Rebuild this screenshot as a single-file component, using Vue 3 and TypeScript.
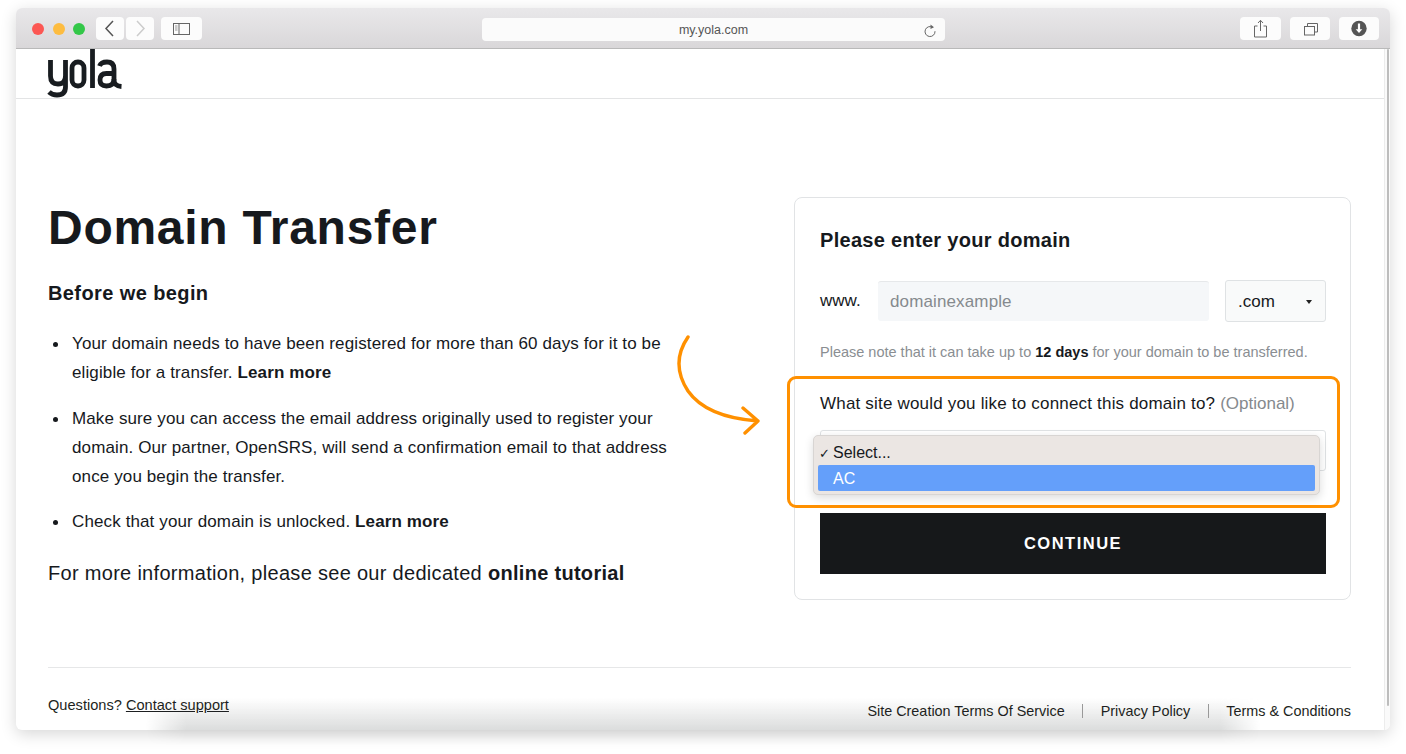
<script setup lang="ts">
const rules: { id: number; parts: { t: string; b?: boolean }[] }[] = [
  { id: 1, parts: [{ t: 'Your domain needs to have been registered for more than 60 days for it to be eligible for a transfer. ' }, { t: 'Learn more', b: true }] },
  { id: 2, parts: [{ t: 'Make sure you can access the email address originally used to register your domain. Our partner, OpenSRS, will send a confirmation email to that address once you begin the transfer.' }] },
  { id: 3, parts: [{ t: 'Check that your domain is unlocked. ' }, { t: 'Learn more', b: true }] },
]
</script>

<template>
  <div class="stage">
    <div class="window">
      <div class="titlebar">
        <div class="lights">
          <span class="light red"></span>
          <span class="light yellow"></span>
          <span class="light green"></span>
        </div>
        <div class="tb-btn nav">
          <svg width="28" height="23" viewBox="0 0 28 23"><path d="M17 4 L10 11.5 L17 19" fill="none" stroke="#555" stroke-width="1.5" /></svg>
        </div>
        <div class="tb-btn nav second">
          <svg width="28" height="23" viewBox="0 0 28 23"><path d="M11 4 L18 11.5 L11 19" fill="none" stroke="#ccc" stroke-width="1.5" /></svg>
        </div>
        <div class="tb-btn wide side">
          <svg width="41" height="23" viewBox="0 0 41 23"><rect x="12.5" y="6.5" width="16" height="11" fill="none" stroke="#666" /><path d="M18 6.5 V17.5" stroke="#666" /><path d="M14 9 H16.5 M14 11 H16.5 M14 13 H16.5" stroke="#999" /></svg>
        </div>
        <div class="url">
          <span>my.yola.com</span>
          <svg class="reload" width="14" height="15" viewBox="0 0 14 15"><path d="M9.8 4.4 A5 5 0 1 0 12 8.2" fill="none" stroke="#666" stroke-width="1" /><path d="M7.5 1.6 L11 4.3 L7.5 6 Z" fill="#666" /></svg>
        </div>
        <div class="tb-btn wide share">
          <svg width="41" height="23" viewBox="0 0 41 23"><path d="M17.5 9 H14.5 V20 H26.5 V9 H23.5" fill="none" stroke="#666" /><path d="M20.5 14 V3.5" stroke="#666" /><path d="M18 6 L20.5 3.3 L23 6" fill="none" stroke="#666" /></svg>
        </div>
        <div class="tb-btn wide tabs">
          <svg width="40" height="23" viewBox="0 0 40 23"><rect x="14.5" y="9.5" width="10" height="8.5" fill="none" stroke="#666" /><path d="M17.5 9 V6.5 H27.5 V15 H25" fill="none" stroke="#666" /></svg>
        </div>
        <div class="tb-btn wide dl">
          <svg width="40" height="23" viewBox="0 0 40 23"><circle cx="20" cy="11.5" r="7.7" fill="#555" /><path d="M20 6.5 V14" stroke="#fff" stroke-width="2.2" /><path d="M16.7 12.3 L20 16 L23.3 12.3 Z" fill="#fff" /></svg>
        </div>
      </div>

      <div class="body">
        <div class="page">
          <header class="head">
            <svg class="logo" width="80" height="49" viewBox="0 0 80 49" role="img" aria-label="yola">
              <g fill="none" stroke="#181c20" stroke-width="4.8" stroke-linecap="butt">
                <path d="M4.5 11 V27 Q4.5 35 12 35 Q19.5 35 19.5 27 V11 M19.5 27 V38 Q19.5 46 11 46 Q6 46 3 43" />
                <rect x="26" y="13" width="12" height="24" rx="6" />
                <path d="M46.5 0 V39" />
                <path d="M53.5 17 Q55 13 61 13 Q68 13 68 20 V31 Q68 37 75.5 37.5" />
                <path d="M68 24.5 H60.5 Q54 24.5 54 31 Q54 37 60.5 37 Q68 37 68 30" />
              </g>
            </svg>
          </header>

          <main class="main">
            <section class="intro">
              <h1 class="title">Domain Transfer</h1>
              <h2 class="before">Before we begin</h2>
              <ul class="rules">
                <li v-for="r in rules" :key="r.id">
                  <template v-for="(p, i) in r.parts" :key="i"><b v-if="p.b">{{ p.t }}</b><template v-else>{{ p.t }}</template></template>
                </li>
              </ul>
              <p class="more">For more information, please see our dedicated <b>online tutorial</b></p>
            </section>

            <svg class="arrow" width="90" height="104" viewBox="0 0 90 104">
              <path d="M16 4 C5 20 3 38 16 58 C30 78 58 86 86 88 M71 75 L86 88 L73 100" fill="none" stroke="#ff9000" stroke-width="3.4" stroke-linecap="round" stroke-linejoin="round" />
            </svg>

            <section class="card">
              <h2 class="card-title">Please enter your domain</h2>
              <div class="domain-row">
                <span class="www">www.</span>
                <input class="domain-input" placeholder="domainexample" />
                <div class="tld"><span>.com</span><i class="caret"></i></div>
              </div>
              <p class="note">Please note that it can take up to <b>12 days</b> for your domain to be transferred.</p>
              <p class="question">What site would you like to connect this domain to? <span>(Optional)</span></p>
              <div class="site-select"></div>
              <button class="continue">CONTINUE</button>

              <div class="highlight"></div>
              <div class="popup">
                <div class="opt"><span class="check">✓</span>Select...</div>
                <div class="opt active">AC</div>
              </div>
            </section>
          </main>

          <footer class="foot">
            <div class="q">Questions? <a>Contact support</a></div>
            <nav class="links">
              <a>Site Creation Terms Of Service</a>
              <i></i>
              <a>Privacy Policy</a>
              <i></i>
              <a>Terms &amp; Conditions</a>
            </nav>
          </footer>
        </div>
        <div class="scroll"><span class="thumb"></span></div>
        <div class="under-shade"></div>
      </div>
    </div>
    <div class="ground-shade"></div>
  </div>
</template>

<style>
html, body { margin: 0; background: #fff; }
</style>

<style scoped>
.stage {
  position: relative;
  width: 1406px;
  height: 754px;
  padding: 8px 16px 24px;
  box-sizing: border-box;
  overflow: hidden;
  font-family: "Liberation Sans", Arial, sans-serif;
  color: #16191d;
}
.window {
  width: 1374px;
  height: 722px;
  border-radius: 6px;
  background: #fff;
  box-shadow: 0 4px 16px rgba(0, 0, 0, 0.16);
  display: flex;
  flex-direction: column;
  overflow: hidden;
}
.titlebar {
  height: 41px;
  flex: none;
  box-sizing: border-box;
  background: linear-gradient(#e9e8ea, #d9d7d9);
  border-bottom: 1px solid #b9b9b9;
  display: flex;
  align-items: flex-start;
  padding-top: 9px;
}
.lights {
  display: flex;
  gap: 8.5px;
  margin: 6px 0 0 16px;
}
.light {
  width: 12px;
  height: 12px;
  border-radius: 50%;
}
.red { background: #fc5753; }
.yellow { background: #fdbc40; }
.green { background: #33c748; }
.tb-btn {
  height: 23px;
  border-radius: 4px;
  background: #fcfcfc;
  display: flex;
}
.nav { width: 28px; margin-left: 11px; }
.nav.second { margin-left: 2px; }
.wide { width: 41px; }
.side { margin-left: 7px; }
.url {
  width: 463px;
  height: 23px;
  margin: 1px 295px 0 280px;
  border-radius: 4px;
  background: #fbfbfb;
  position: relative;
  display: flex;
  align-items: center;
  justify-content: center;
  font-size: 12.5px;
  color: #555;
}
.reload {
  position: absolute;
  right: 8px;
  top: 5px;
}
.tabs { width: 40px; margin-left: 9px; }
.dl { width: 40px; margin-left: 9px; }

.body {
  flex: 1;
  display: flex;
  position: relative;
  min-height: 0;
}
.page {
  flex: 1;
  min-width: 0;
}
.head {
  height: 49px;
  box-sizing: content-box;
  border-bottom: 1px solid #e3e4e5;
  padding-left: 30px;
}
.logo { display: block; }
.main {
  display: flex;
  justify-content: space-between;
  align-items: flex-start;
  position: relative;
  margin: 98px 33px 0 32px;
}
.intro { width: 625px; }
.title {
  margin: 0;
  font-size: 48px;
  line-height: 62px;
  font-weight: 700;
  letter-spacing: 0.72px;
}
.before {
  margin: 18px 0 0;
  font-size: 20px;
  line-height: 32px;
  font-weight: 700;
  letter-spacing: 0.4px;
}
.rules {
  margin: 20px 0 0;
  padding: 0 0 0 24px;
  list-style: none;
  font-size: 17px;
  line-height: 29px;
  letter-spacing: 0.12px;
}
.rules li {
  position: relative;
}
.rules li::before {
  content: "";
  position: absolute;
  left: -19px;
  top: 13px;
  width: 5px;
  height: 5px;
  border-radius: 50%;
  background: #16191d;
}
.rules li + li { margin-top: 16.5px; }
.more {
  margin: 21px 0 0;
  font-size: 20px;
  line-height: 32px;
  letter-spacing: 0.3px;
}
.arrow {
  position: absolute;
  left: 624px;
  top: 136px;
}
.card {
  width: 557px;
  height: 403px;
  box-sizing: border-box;
  border: 1px solid #e1e3e5;
  border-radius: 8px;
  padding: 27px 24px 0 25px;
  position: relative;
}
.card-title {
  margin: 0;
  font-size: 20px;
  line-height: 30px;
  font-weight: 700;
  letter-spacing: 0.3px;
}
.domain-row {
  display: flex;
  align-items: center;
  margin-top: 25px;
}
.www {
  width: 58px;
  font-size: 17px;
}
.domain-input {
  width: 331px;
  height: 40px;
  box-sizing: border-box;
  border: 0;
  border-top: 1px solid #e6e8ea;
  border-radius: 3px;
  background: #f5f7f9;
  padding: 0 12px;
  font-size: 17px;
  letter-spacing: 0.13px;
  font-family: "Liberation Sans", Arial, sans-serif;
  outline: 0;
}
.domain-input::placeholder { color: #858a8e; opacity: 1; }
.tld {
  width: 101px;
  height: 42px;
  margin-left: 16px;
  box-sizing: border-box;
  border: 1px solid #dfe2e4;
  border-radius: 3px;
  background: #f9fafa;
  display: flex;
  align-items: center;
  justify-content: space-between;
  padding: 1px 13px 0 12px;
  font-size: 17px;
}
.caret {
  width: 0;
  height: 0;
  border: 3.5px solid transparent;
  border-top: 4px solid #222;
  border-bottom: 0;
}
.note {
  margin: 20px 0 0;
  font-size: 14.5px;
  line-height: 20px;
  color: #8a8e92;
}
.note b { color: #16191d; font-weight: 700; }
.question {
  margin: 32px 0 0;
  font-size: 17px;
  line-height: 20px;
  letter-spacing: 0.19px;
}
.question span { color: #85898d; letter-spacing: 0; }
.site-select {
  height: 41px;
  margin-top: 16px;
  border: 1px solid #dfe2e4;
  border-radius: 3px;
  box-sizing: border-box;
}
.continue {
  display: block;
  width: 100%;
  height: 61px;
  margin-top: 42px;
  padding: 0 0 1px;
  border: 0;
  background: #16181a;
  color: #fff;
  font-family: "Liberation Sans", Arial, sans-serif;
  font-size: 16.5px;
  font-weight: 700;
  letter-spacing: 1.5px;
}
.highlight {
  position: absolute;
  left: -8px;
  top: 178px;
  width: 553px;
  height: 132px;
  box-sizing: border-box;
  border: 3.5px solid #ff9000;
  border-radius: 9px;
  pointer-events: none;
}
.popup {
  position: absolute;
  left: 18px;
  top: 237px;
  width: 507px;
  height: 60px;
  box-sizing: border-box;
  padding: 3px 4px 0;
  background: #ebe6e3;
  border: 1px solid #d8d5d3;
  border-radius: 5px;
  box-shadow: 0 3px 10px rgba(0, 0, 0, 0.14);
  font-size: 16px;
}
.opt {
  height: 25px;
  line-height: 27px;
  padding-left: 15px;
  position: relative;
}
.check {
  position: absolute;
  left: 1px;
  top: 1px;
  font-size: 13px;
}
.opt.active {
  height: 26px;
  line-height: 27px;
  margin-top: 1px;
  background: #649ffa;
  border-radius: 2px;
  color: #fff;
}
.foot {
  position: relative;
  z-index: 2;
  margin: 67px 33px 0 32px;
  border-top: 1px solid #e6e7e8;
  display: flex;
  justify-content: space-between;
  font-size: 14.5px;
  color: #1d1f21;
}
.q { margin-top: 29px; font-size: 14.6px; }
.q a { text-decoration: underline; }
.links {
  display: flex;
  align-items: center;
  margin-top: 34px;
  height: 17px;
  font-size: 14.4px;
}
.links i {
  width: 1px;
  height: 14px;
  background: #999;
  margin: 0 17.5px;
}
.scroll {
  width: 6px;
  flex: none;
  box-sizing: border-box;
  border-left: 1px solid #ececec;
  background: #fafafa;
  display: flex;
}
.thumb {
  width: 2px;
  height: 657px;
  margin-left: 2px;
  border-radius: 1px;
  background: #bdbdbd;
}
.under-shade {
  position: absolute;
  left: 130px;
  right: 130px;
  bottom: 0;
  height: 32px;
  background: linear-gradient(rgba(200, 202, 202, 0), rgba(200, 202, 202, 0.65));
  -webkit-mask-image: linear-gradient(90deg, transparent, #000 40px, #000 calc(100% - 40px), transparent);
  mask-image: linear-gradient(90deg, transparent, #000 40px, #000 calc(100% - 40px), transparent);
  pointer-events: none;
}
.ground-shade {
  position: absolute;
  left: 146px;
  width: 1114px;
  top: 730px;
  height: 16px;
  background: linear-gradient(rgba(0, 0, 0, 0.05), rgba(0, 0, 0, 0));
  -webkit-mask-image: linear-gradient(90deg, transparent, #000 40px, #000 calc(100% - 40px), transparent);
  mask-image: linear-gradient(90deg, transparent, #000 40px, #000 calc(100% - 40px), transparent);
  pointer-events: none;
}
</style>
